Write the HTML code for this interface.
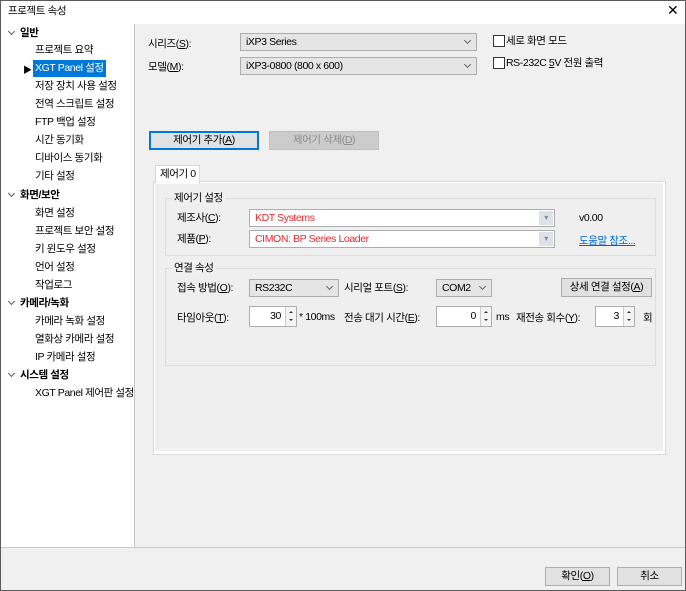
<!DOCTYPE html>
<html><head><meta charset="utf-8"><style>
*{box-sizing:border-box;margin:0;padding:0}
body{width:686px;height:591px;position:relative;background:#f0f0f0;font-family:"Liberation Sans","Noto Sans CJK KR",sans-serif;font-size:10.5px;letter-spacing:-0.4px;color:#000;overflow:hidden}
.a{position:absolute;white-space:nowrap;line-height:14px}
.win{position:absolute;left:0;top:0;width:686px;height:591px;border:1px solid #5a5a5a}
.cb{position:absolute;background:#e5e5e5;border:1px solid #adadad;height:18px;padding-left:5px;line-height:16px}
.cb:after{content:"";position:absolute;right:6px;top:4px;width:4px;height:4px;border-right:1px solid #666;border-bottom:1px solid #666;transform:rotate(45deg)}
.ed{position:absolute;background:#fff;border:1px solid #adadad;height:18px;padding-left:5px;line-height:16px;color:#e8262b}
.ed:after{content:"▾";position:absolute;right:1px;top:1px;width:14px;height:14px;background:#dde2ea;color:#888;font-size:8px;text-align:center;line-height:14px}
.btn{position:absolute;background:#e1e1e1;border:1px solid #adadad;text-align:center;line-height:16px;height:19px}
.sp{position:absolute;background:#fff;border:1px solid #adadad;height:21px;text-align:right;line-height:18px}
.sp i{position:absolute;right:0;top:0;width:11px;height:19px;border-left:1px solid #ccc;background:#f4f4f4}
.sp i:before{content:"";position:absolute;left:3px;top:4px;border:2.5px solid transparent;border-bottom-color:#333;border-top:none}
.sp i:after{content:"";position:absolute;left:3px;top:12px;border:2.5px solid transparent;border-top-color:#333;border-bottom:none}
.grp{position:absolute;border:1px solid #dcdcdc}
.grp span{position:absolute;top:-8px;left:6px;background:#f0f0f0;padding:0 2px;line-height:14px}
.chk{position:absolute;width:12px;height:12px;border:1px solid #333;background:#fff}
.t{position:absolute;white-space:nowrap;line-height:14px}
.h{font-weight:bold}
.ar{position:absolute;width:5px;height:5px;border-right:1px solid #555;border-bottom:1px solid #555;transform:rotate(45deg)}
</style></head><body>
<div style="position:absolute;left:0;top:0;width:686px;height:24px;background:#fff"></div>
<div class="a" style="left:8px;top:4px">프로젝트 속성</div>
<div class="a" style="left:667px;top:3px;font-size:14px">✕</div>
<div style="position:absolute;left:1px;top:24px;width:134px;height:524px;background:#fff;border-right:1px solid #c8c8c8"></div>
<div style="position:absolute;left:1px;top:547px;width:684px;height:1px;background:#c8c8c8"></div>
<!-- tree -->
<div class="ar" style="left:9px;top:29px"></div><div class="t h" style="left:20px;top:26px">일반</div>
<div class="t" style="left:35px;top:43px">프로젝트 요약</div>
<div class="t" style="left:23px;top:63px;font-size:9px">▶</div>
<div class="t" style="left:33px;top:60px;height:17px;line-height:17px;padding:0 2px;background:#0078d7;color:#fff">XGT Panel 설정</div>
<div class="t" style="left:35px;top:79px">저장 장치 사용 설정</div>
<div class="t" style="left:35px;top:97px">전역 스크립트 설정</div>
<div class="t" style="left:35px;top:115px">FTP 백업 설정</div>
<div class="t" style="left:35px;top:133px">시간 동기화</div>
<div class="t" style="left:35px;top:151px">디바이스 동기화</div>
<div class="t" style="left:35px;top:169px">기타 설정</div>
<div class="ar" style="left:9px;top:191px"></div><div class="t h" style="left:20px;top:188px">화면/보안</div>
<div class="t" style="left:35px;top:206px">화면 설정</div>
<div class="t" style="left:35px;top:224px">프로젝트 보안 설정</div>
<div class="t" style="left:35px;top:242px">키 윈도우 설정</div>
<div class="t" style="left:35px;top:260px">언어 설정</div>
<div class="t" style="left:35px;top:278px">작업로그</div>
<div class="ar" style="left:9px;top:299px"></div><div class="t h" style="left:20px;top:296px">카메라/녹화</div>
<div class="t" style="left:35px;top:314px">카메라 녹화 설정</div>
<div class="t" style="left:35px;top:332px">열화상 카메라 설정</div>
<div class="t" style="left:35px;top:350px">IP 카메라 설정</div>
<div class="ar" style="left:9px;top:371px"></div><div class="t h" style="left:20px;top:368px">시스템 설정</div>
<div class="t" style="left:35px;top:386px">XGT Panel 제어판 설정</div>
<!-- top -->
<div class="t" style="left:148px;top:37px">시리즈(<u>S</u>):</div>
<div class="cb" style="left:240px;top:33px;width:237px">iXP3 Series</div>
<div class="t" style="left:148px;top:60px">모델(<u>M</u>):</div>
<div class="cb" style="left:240px;top:57px;width:237px">iXP3-0800 (800 x 600)</div>
<div class="chk" style="left:493px;top:35px"></div><div class="t" style="left:506px;top:34px">세로 화면 모드</div>
<div class="chk" style="left:493px;top:57px"></div><div class="t" style="left:506px;top:56px">RS-232C <u>5</u>V 전원 출력</div>
<div class="btn" style="left:149px;top:131px;width:110px;border:2px solid #0078d7;line-height:15px">제어기 추가(<u>A</u>)</div>
<div class="btn" style="left:269px;top:131px;width:110px;background:#ccc;border-color:#bfbfbf;color:#8c8c8c">제어기 삭제(<u>D</u>)</div>
<!-- tab -->
<div style="position:absolute;left:153px;top:181px;width:513px;height:274px;background:#fff;border:1px solid #d9d9d9"></div>
<div style="position:absolute;left:155px;top:183px;width:508px;height:268px;background:#efefef"></div>
<div style="position:absolute;left:155px;top:165px;width:45px;height:19px;background:#fff;border:1px solid #d9d9d9;border-bottom:none"></div>
<div class="t" style="left:160px;top:167px">제어기 0</div>
<div class="grp" style="left:165px;top:198px;width:491px;height:58px"><span>제어기 설정</span></div>
<div class="t" style="left:177px;top:211px">제조사(<u>C</u>):</div>
<div class="ed" style="left:249px;top:209px;width:306px">KDT Systems</div>
<div class="t" style="left:579px;top:211px">v0.00</div>
<div class="t" style="left:177px;top:232px">제품(<u>P</u>):</div>
<div class="ed" style="left:249px;top:230px;width:306px">CIMON: BP Series Loader</div>
<div class="t" style="left:579px;top:234px;color:#0066cc;text-decoration:underline">도움말 참조...</div>
<div class="grp" style="left:165px;top:268px;width:491px;height:98px"><span>연결 속성</span></div>
<div class="t" style="left:177px;top:281px">접속 방법(<u>O</u>):</div>
<div class="cb" style="left:249px;top:279px;width:90px">RS232C</div>
<div class="t" style="left:344px;top:281px">시리얼 포트(<u>S</u>):</div>
<div class="cb" style="left:436px;top:279px;width:56px">COM2</div>
<div class="btn" style="left:561px;top:278px;width:91px">상세 연결 설정(<u>A</u>)</div>
<div class="t" style="left:177px;top:311px">타임아웃(<u>T</u>):</div>
<div class="sp" style="left:249px;top:306px;width:48px;padding-right:15px">30<i></i></div>
<div class="t" style="left:299px;top:310px">* 100ms</div>
<div class="t" style="left:344px;top:311px">전송 대기 시간(<u>E</u>):</div>
<div class="sp" style="left:436px;top:306px;width:56px;padding-right:15px">0<i></i></div>
<div class="t" style="left:496px;top:310px">ms</div>
<div class="t" style="left:516px;top:311px">재전송 회수(<u>Y</u>):</div>
<div class="sp" style="left:595px;top:306px;width:40px;padding-right:15px">3<i></i></div>
<div class="t" style="left:643px;top:311px">회</div>
<!-- footer -->
<div class="btn" style="left:545px;top:567px;width:65px">확인(<u>O</u>)</div>
<div class="btn" style="left:617px;top:567px;width:65px">취소</div>
<div class="win"></div>
</body></html>
